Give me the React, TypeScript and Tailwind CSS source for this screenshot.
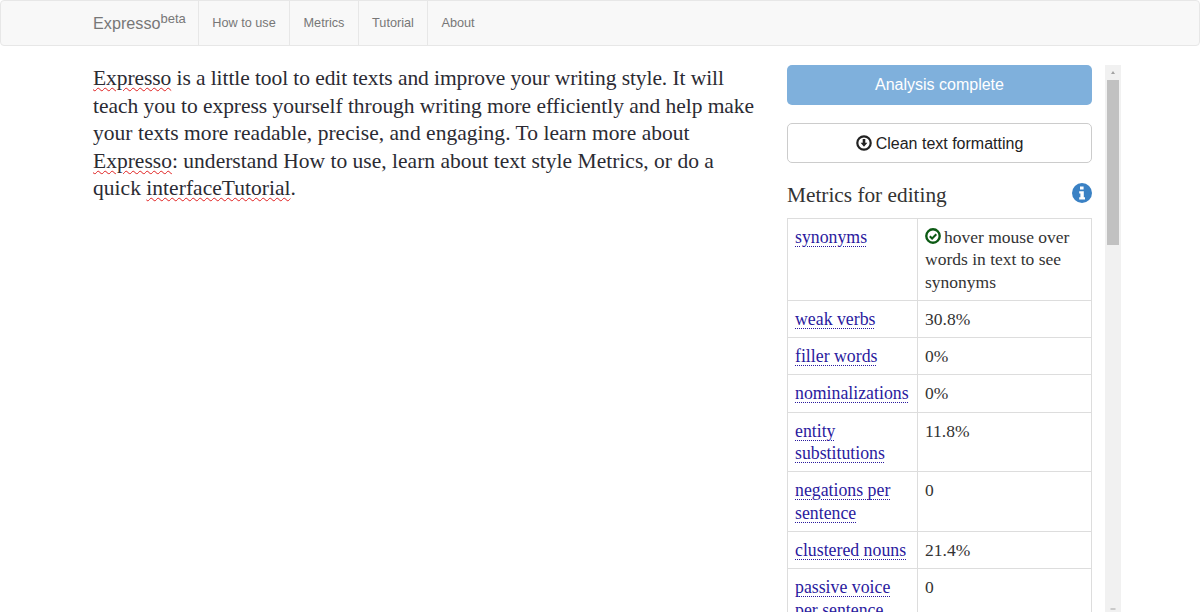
import React from "react";

const serif = "font-['Liberation_Serif',serif]";
const sans = "font-['Liberation_Sans',sans-serif]";

function Wavy({ children }: { children: React.ReactNode }) {
  return <span className="underline decoration-wavy decoration-[#e02020] decoration-1 underline-offset-2">{children}</span>;
}

function M({ children }: { children: React.ReactNode }) {
  return <a className="text-[#2a1a9e] underline decoration-dotted decoration-1 underline-offset-[3px]">{children}</a>;
}

function DownCircle() {
  return (
    <svg viewBox="0 0 16 16" className="w-4 h-4 mr-1 inline-block align-[-2px]">
      <circle cx="8" cy="8" r="6.7" fill="none" stroke="#222" strokeWidth="2.2" />
      <path d="M6.7 4h2.6v3.8h2.1L8 11.8 4.6 7.8h2.1z" fill="#222" />
    </svg>
  );
}

function Info() {
  return (
    <svg viewBox="0 0 20 20" className="w-5 h-5">
      <circle cx="10" cy="10" r="10" fill="#3a81c4" />
      <path d="M8 3.6h3.6v3H8zM7.2 8.2h4.6v6h1.2v2.4H7.2v-2.4h1.2v-3.6H7.2z" fill="#fff" />
    </svg>
  );
}

function Check() {
  return (
    <svg viewBox="0 0 16 16" className="w-4 h-4 inline-block mr-[3px] align-[-1px]">
      <circle cx="8" cy="8" r="6.7" fill="none" stroke="#0c5a14" strokeWidth="2.4" />
      <path d="M4.8 8.2l2.3 2.3 4.2-4.2" fill="none" stroke="#0c5a14" strokeWidth="2" />
    </svg>
  );
}

const rows: [React.ReactNode, React.ReactNode][] = [
  [<M>synonyms</M>, <><Check />hover mouse over words in text to see synonyms</>],
  [<M>weak verbs</M>, "30.8%"],
  [<M>filler words</M>, "0%"],
  [<M>nominalizations</M>, "0%"],
  [<M>entity substitutions</M>, "11.8%"],
  [<M>negations per sentence</M>, "0"],
  [<M>clustered nouns</M>, "21.4%"],
  [<M>passive voice per sentence</M>, "0"],
];

export default function App() {
  return (
    <div className="h-[612px] overflow-hidden bg-white relative">
      <nav className={`${sans} h-[46px] bg-[#f8f8f8] border border-[#e7e7e7] rounded-[4px] flex pl-[92px] text-[#777] text-[12.7px]`}>
        <div className="w-[105px] flex items-center text-[16.2px] pt-[1px]">
          Expresso<sup className="text-[13px] leading-none self-start mt-[10px] top-0">beta</sup>
        </div>
        <a className="w-[91px] pt-[2px] border-l border-[#e7e7e7] flex items-center justify-center">How to use</a>
        <a className="w-[69px] pt-[2px] border-l border-[#e7e7e7] flex items-center justify-center">Metrics</a>
        <a className="w-[69px] pt-[2px] border-l border-[#e7e7e7] flex items-center justify-center">Tutorial</a>
        <a className="w-[61px] pt-[2px] border-l border-[#e7e7e7] flex items-center justify-center">About</a>
      </nav>
      <div className="flex pl-[93px] pt-[19px]">
        <div className={`${serif} w-[694px] text-[21.5px] leading-[27.5px] text-[#2b2b33] whitespace-nowrap`}>
          <div className="tracking-[-0.08px]"><Wavy>Expresso</Wavy> is a little tool to edit texts and improve your writing style. It will</div>
          <div className="tracking-[-0.04px]">teach you to express yourself through writing more efficiently and help make</div>
          <div className="tracking-[0.03px]">your texts more readable, precise, and engaging. To learn more about</div>
          <div className="tracking-[0.015px]"><Wavy>Expresso</Wavy>: understand How to use, learn about text style Metrics, or do a</div>
          <div className="tracking-[0.03px]">quick <Wavy>interfaceTutorial</Wavy>.</div>
        </div>
        <div className="w-[305px] flex flex-col">
          <button className={`${sans} h-10 rounded-[5px] bg-[#7fb0dc] text-white text-[16px] font-normal`}>Analysis complete</button>
          <button className={`${sans} h-10 mt-[18px] pt-[1px] rounded-[5px] border border-[#ccc] bg-white text-[#222] text-[16px]`}><DownCircle />Clean text formatting</button>
          <div className="flex justify-between items-start mt-[20px] h-[24px]">
            <h3 className={`${serif} text-[21.3px] leading-[24px] text-[#333]`}>Metrics for editing</h3>
            <Info />
          </div>
          <table className={`${serif} mt-[11px] w-[305px] table-fixed border-collapse text-[17.5px] leading-[22.3px] text-[#333]`}>
            <colgroup>
              <col className="w-[130px]" />
              <col />
            </colgroup>
            <tbody>
              {rows.map((r, i) => (
                <tr key={i}>
                  <td className="border border-[#ddd] pl-[7px] pr-2 py-[7px] align-top text-[17.8px]">{r[0]}</td>
                  <td className="border border-[#ddd] pl-[7px] pr-2 py-[7px] align-top">{r[1]}</td>
                </tr>
              ))}
            </tbody>
          </table>
        </div>
        <div className="ml-[13px] w-[16px] h-[547px] bg-[#f1f1f1] flex flex-col items-center">
          <svg viewBox="0 0 16 15" className="w-[16px] h-[15px] shrink-0"><path d="M6 9l2-3 2 3z" fill="#a3a3a3" /></svg>
          <div className="w-[12px] h-[165px] bg-[#c1c1c1]" />
          <svg viewBox="0 0 16 4" className="w-[16px] h-[4px] shrink-0 mt-auto"><path d="M5.5 1h5" stroke="#a3a3a3" strokeWidth="1" /></svg>
        </div>
      </div>
    </div>
  );
}
